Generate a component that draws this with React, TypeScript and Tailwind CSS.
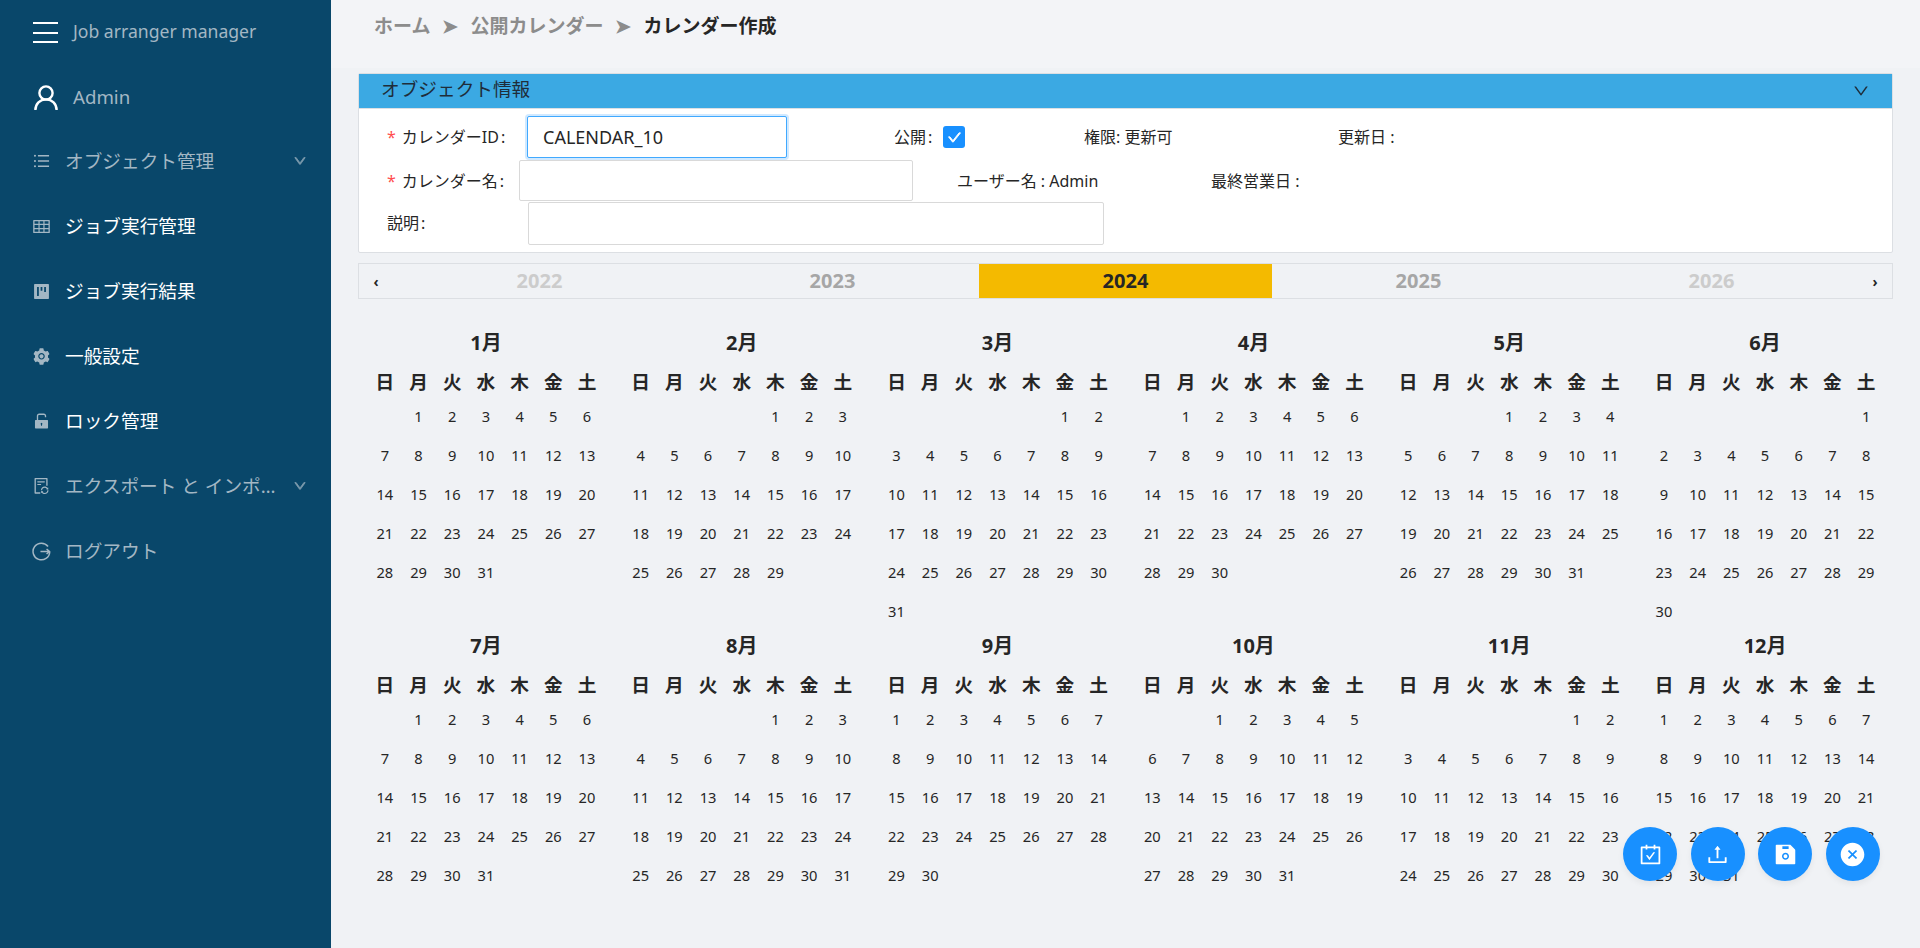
import React from "react";
import {
  AiOutlineBars,
  AiOutlineTable,
  AiFillProject,
  AiFillSetting,
  AiFillUnlock,
  AiOutlineFileSync,
  AiOutlineDown,
  AiOutlineCarryOut,
  AiOutlineUpload,
  AiFillSave,
  AiFillCloseCircle,
  AiOutlineCheck,
} from "react-icons/ai";

const FONT = "font-['Noto_Sans','Noto_Sans_CJK_JP',sans-serif]";

const LogoutIcon = () => (
  <svg width="19" height="19" viewBox="0 0 18 18" fill="none" stroke="currentColor" strokeWidth="1.4">
    <path d="M15.2 4.2A7.9 7.9 0 1 0 16.8 9.4" />
    <path d="M8 9h8.6M13.8 6.6 16.6 9l-2.8 2.4" />
  </svg>
);

const UserIcon = () => (
  <svg width="24" height="26" viewBox="0 0 24 26" fill="none" stroke="white" strokeWidth="2.4">
    <circle cx="12" cy="8" r="6.6" />
    <path d="M1.4 25c0-6 4.6-10.6 10.6-10.6S22.600 19 22.600 25" />
  </svg>
);

const menu = [
  { label: "オブジェクト管理", icon: <AiOutlineBars size={20} />, active: false, arrow: true },
  { label: "ジョブ実行管理", icon: <AiOutlineTable size={21} />, active: true },
  { label: "ジョブ実行結果", icon: <AiFillProject size={21} />, active: true },
  { label: "一般設定", icon: <AiFillSetting size={21} />, active: true },
  { label: "ロック管理", icon: <AiFillUnlock size={20} />, active: true },
  { label: "エクスポート と インポート", icon: <AiOutlineFileSync size={20} />, active: false, arrow: true },
  { label: "ログアウト", icon: <LogoutIcon />, active: false },
];

const Sidebar = () => (
  <aside className="w-[331px] shrink-0 h-full bg-[#09476a] text-[18.67px] text-[#a3b7c4]">
    <div className="h-[65px] flex items-center pl-[33px]">
      <div className="w-[25px] h-[21px] flex flex-col justify-between">
        <span className="h-[2px] bg-white" />
        <span className="h-[2px] bg-white" />
        <span className="h-[2px] bg-white" />
      </div>
      <span className="ml-[15px] text-[17.6px] pb-[2px]">Job arranger manager</span>
    </div>
    <div className="h-[65px] flex items-center pl-[34px]">
      <UserIcon />
      <span className="ml-[15px] pb-[2px]">Admin</span>
    </div>
    {menu.map((m) => (
      <div key={m.label} className="h-[65px] flex items-center pl-[32px] pr-[24px] pb-[3px]">
        <span className="w-[19px] flex justify-center text-[#a3b7c4]">{m.icon}</span>
        <span className={`ml-[14px] flex-1 truncate ${m.active ? "text-white" : ""}`}>{m.label}</span>
        {m.arrow && <AiOutlineDown size={14} className="ml-[12px] text-[#7d9bad]" strokeWidth={60} />}
      </div>
    ))}
  </aside>
);

const Colon = () => <span className="ml-[2px]">:</span>;

const Required = () => <span className="text-[#ff4d4f] mr-[6px]">*</span>;

const ObjectPanel = () => (
  <div className="border border-[#dcdfe3] rounded-[2px] bg-white">
    <div className="h-[34px] bg-[#3ba9e3] flex items-center justify-between pl-[22px] pr-[22px] text-[18.67px] text-[#1f2d3a]">
      <span className="pb-[4px]">オブジェクト情報</span>
      <AiOutlineDown size={18} />
    </div>
    <div className="border-t border-[#dcdfe3] pl-[28px] pt-[7px] h-[144px] text-[16px] text-[#262626]">
      <div className="flex items-center h-[42px]">
        <label className="w-[140px]"><Required />カレンダーID<Colon /></label>
        <input
          readOnly
          value="CALENDAR_10"
          className="w-[260px] h-[42px] px-[15px] text-[18px] text-[#262626] bg-white border border-[#40a9ff] rounded-[2px] shadow-[0_0_0_2px_rgba(24,144,255,0.2)] outline-none"
        />
        <span className="ml-[107px] w-[49px]">公開<Colon /></span>
        <span className="w-[22px] h-[22px] rounded-[3px] bg-[#1890ff] flex items-center justify-center text-white">
          <AiOutlineCheck size={15} strokeWidth={60} />
        </span>
        <span className="ml-[119px] w-[254px]">権限: 更新可</span>
        <span>更新日 :</span>
      </div>
      <div className="flex items-center h-[42px] mt-[1px]">
        <label className="w-[132px] pt-[1px]"><Required />カレンダー名<Colon /></label>
        <input readOnly className="w-[394px] h-[41px] bg-white border border-[#d9d9d9] rounded-[2px] outline-none" />
        <span className="ml-[44px] w-[254px] pt-[2px]">ユーザー名 : Admin</span>
        <span className="pt-[2px]">最終営業日 :</span>
      </div>
      <div className="flex items-center h-[43px] mt-[1px]">
        <label className="w-[141px] pb-[2px]">説明<Colon /></label>
        <textarea readOnly className="w-[576px] h-[43px] resize-none bg-white border border-[#d9d9d9] rounded-[2px] outline-none" />
      </div>
    </div>
  </div>
);

const years = [
  { y: 2022, c: "text-[#cccccc]" },
  { y: 2023, c: "text-[#a6a6a6]" },
  { y: 2024, c: "text-[#262626] bg-[#f4ba00]" },
  { y: 2025, c: "text-[#a6a6a6]" },
  { y: 2026, c: "text-[#cccccc]" },
];

const YearBar = () => (
  <div className="mt-[10px] h-[36px] border border-[#dcdfe3] flex items-stretch">
    <div className="w-[34px] flex items-center justify-center text-[14px] font-bold text-[#262626]">‹</div>
    {years.map((y) => (
      <div key={y.y} className={`flex-1 flex items-center justify-center text-[20px] font-bold ${y.c}`}>
        {y.y}
      </div>
    ))}
    <div className="w-[34px] flex items-center justify-center text-[14px] font-bold text-[#262626]">›</div>
  </div>
);

const weekdays = ["日", "月", "火", "水", "木", "金", "土"];

const Month = ({ month }: { month: number }) => {
  const first = new Date(2024, month, 1).getDay();
  const count = new Date(2024, month + 1, 0).getDate();
  const cells: (number | null)[] = [];
  for (let i = 0; i < first; i++) cells.push(null);
  for (let d = 1; d <= count; d++) cells.push(d);

  return (
    <div className="px-[10px] h-[303px] text-[#262626]">
      <div className="h-[33px] leading-[28px] text-center text-[20px] font-bold">{month + 1}月</div>
      <div className="grid grid-cols-7 h-[34px] pt-[5px] text-[18.67px] font-bold">
        {weekdays.map((w) => (
          <div key={w} className="flex items-center justify-center">{w}</div>
        ))}
      </div>
      <div className="grid grid-cols-7 auto-rows-[39px] text-[14.67px]">
        {cells.map((d, i) => (
          <div key={i} className="flex items-center justify-center">{d}</div>
        ))}
      </div>
    </div>
  );
};

const fabs = [
  <AiOutlineCarryOut size={25} />,
  <AiOutlineUpload size={25} />,
  <AiFillSave size={25} />,
  <AiFillCloseCircle size={27} />,
];

const App = () => {
  return (
    <div className={`${FONT} flex w-full h-[948px] overflow-hidden bg-[#f0f2f5]`}>
      <Sidebar />
      <main className="flex-1 min-w-0 relative">
        <div className="h-[68px] bg-[#f3f4f7] pl-[43px] pt-[12px] flex items-start text-[19px] font-semibold text-[#8c8c8c]">
          <span>ホーム</span>
          <span className="mx-[12px] text-[19px] leading-[28px]">➤</span>
          <span>公開カレンダー</span>
          <span className="mx-[12px] text-[19px] leading-[28px]">➤</span>
          <span className="text-[#262626]">カレンダー作成</span>
        </div>
        <div className="pl-[27px] pr-[27px] pt-[5px]">
          <ObjectPanel />
          <YearBar />
          <div className="grid grid-cols-6 mt-[30px]">
            {Array.from({ length: 12 }, (_, m) => (
              <Month key={m} month={m} />
            ))}
          </div>
        </div>
        <div className="absolute left-[1292px] top-[827px] flex gap-[13.5px]">
          {fabs.map((f, i) => (
            <button
              key={i}
              className="w-[54px] h-[54px] rounded-full bg-[#1890ff] text-white flex items-center justify-center shadow-[0_3px_6px_rgba(0,0,0,0.06)]"
            >
              {f}
            </button>
          ))}
        </div>
      </main>
    </div>
  );
};

export default App;
